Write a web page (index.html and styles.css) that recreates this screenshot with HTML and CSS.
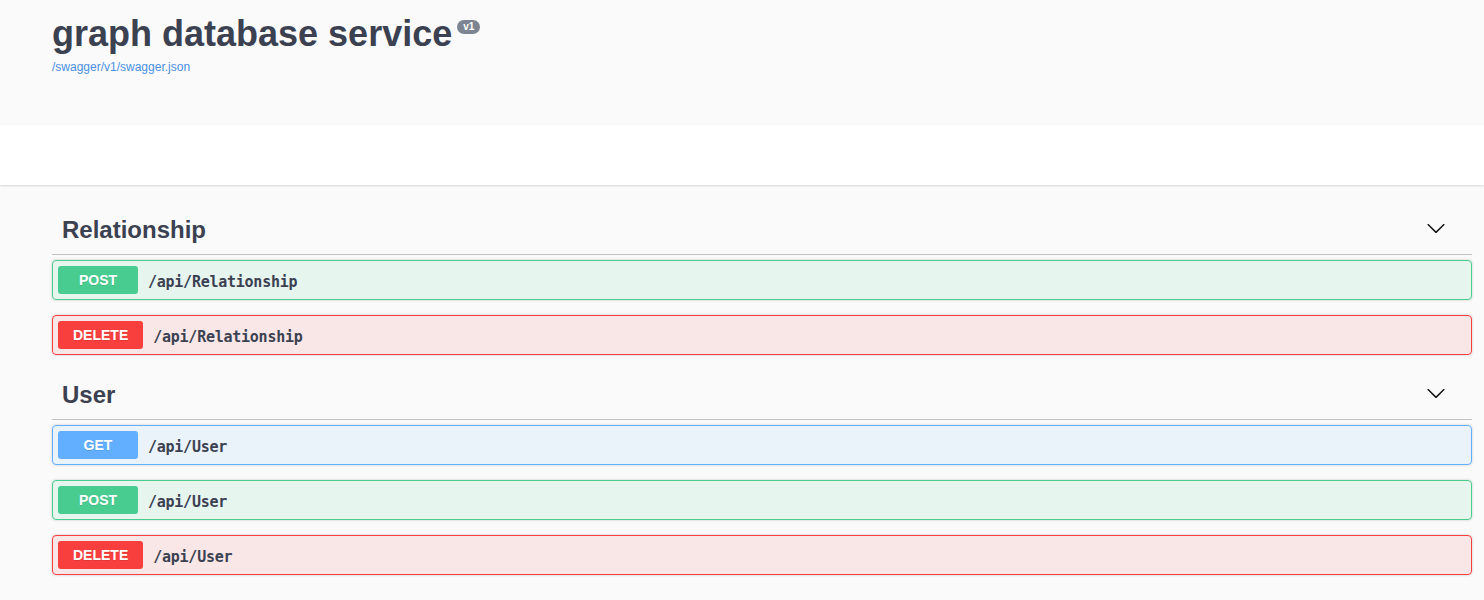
FILE: index.html
```html
<!DOCTYPE html>
<html lang="en">
<head>
<meta charset="utf-8">
<title>graph database service</title>
<link rel="stylesheet" href="styles.css">
</head>
<body>
<div class="info">
  <h2 class="title">graph database service<small class="version">v1</small></h2>
  <a class="link" href="#">/swagger/v1/swagger.json</a>
</div>
<div class="scheme-container"></div>
<div class="wrapper">
  <section class="tag-section">
    <h3 class="tag">
      <span class="tag-name">Relationship</span>
      <button class="expand" aria-label="expand">
        <svg width="20" height="20" viewBox="0 0 20 20"><path d="M17.418 6.109c.272-.268.709-.268.979 0s.271.701 0 .969l-7.908 7.83c-.27.268-.707.268-.979 0l-7.908-7.830c-.27-.268-.27-.701 0-.969.271-.268.709-.268.979 0L10 13.25l7.418-7.141z"/></svg>
      </button>
    </h3>
    <div class="opblock post"><span class="method">POST</span><span class="path">/api/Relationship</span></div>
    <div class="opblock delete"><span class="method">DELETE</span><span class="path">/api/Relationship</span></div>
  </section>
  <section class="tag-section">
    <h3 class="tag">
      <span class="tag-name">User</span>
      <button class="expand" aria-label="expand">
        <svg width="20" height="20" viewBox="0 0 20 20"><path d="M17.418 6.109c.272-.268.709-.268.979 0s.271.701 0 .969l-7.908 7.83c-.27.268-.707.268-.979 0l-7.908-7.830c-.27-.268-.27-.701 0-.969.271-.268.709-.268.979 0L10 13.25l7.418-7.141z"/></svg>
      </button>
    </h3>
    <div class="opblock get"><span class="method">GET</span><span class="path">/api/User</span></div>
    <div class="opblock post"><span class="method">POST</span><span class="path">/api/User</span></div>
    <div class="opblock delete"><span class="method">DELETE</span><span class="path">/api/User</span></div>
  </section>
</div>
</body>
</html>
```
FILE: styles.css
```css
html, body {
  margin: 0;
  padding: 0;
}
body {
  background: #fafafa;
  font-family: "Liberation Sans", Arial, sans-serif;
  color: #3b4151;
  overflow: hidden;
}
.info {
  padding: 13px 12px 51px 52px;
}
.title {
  margin: 0;
  font-size: 36px;
  line-height: 41px;
  font-weight: 700;
  color: #3b4151;
}
.version {
  display: inline-block;
  vertical-align: top;
  margin: 7px 0 0 5px;
  padding: 2px 6px;
  font-size: 10px;
  line-height: 10px;
  font-weight: 700;
  color: #fff;
  background: #7d8492;
  border-radius: 57px;
}
.link {
  display: block;
  margin-top: 6px;
  font-size: 12px;
  line-height: 14px;
  color: #4990e2;
  text-decoration: none;
}
.scheme-container {
  height: 60px;
  background: #fff;
  box-shadow: 0 1px 2px 0 rgba(0, 0, 0, 0.15);
  margin-bottom: 20px;
}
.wrapper {
  padding: 0 12px 0 52px;
}
.tag {
  display: flex;
  align-items: center;
  margin: 0 0 5px;
  padding: 10px 20px 10px 10px;
  border-bottom: 1px solid rgba(59, 65, 81, 0.3);
  font-size: 24px;
  line-height: 29px;
  font-weight: 700;
  color: #3b4151;
}
.tag-name {
  flex: 1;
}
.expand {
  border: none;
  background: none;
  padding: 0;
  margin: -4px 6px 0 0;
  width: 20px;
  height: 20px;
  display: flex;
}
.expand svg {
  fill: #111;
}
.opblock {
  display: flex;
  align-items: center;
  padding: 5px;
  margin: 0 0 15px;
  border: 1px solid;
  border-radius: 4px;
  box-shadow: 0 0 3px rgba(0, 0, 0, 0.19);
}
.method {
  min-width: 80px;
  box-sizing: border-box;
  padding: 6px 15px;
  font-size: 14px;
  line-height: 16px;
  font-weight: 700;
  text-align: center;
  color: #fff;
  border-radius: 3px;
  text-shadow: 0 1px 0 rgba(0, 0, 0, 0.1);
}
.path {
  padding: 3px 10px 0;
  font-family: "DejaVu Sans Mono", monospace;
  font-size: 15px;
  letter-spacing: -0.25px;
  font-weight: 700;
  color: #3b4151;
}
.post {
  border-color: #49cc90;
  background: rgba(73, 204, 144, 0.1);
}
.post .method { background: #49cc90; }
.delete {
  border-color: #f93e3e;
  background: rgba(249, 62, 62, 0.1);
}
.delete .method { background: #f93e3e; }
.get {
  border-color: #61affe;
  background: rgba(97, 175, 254, 0.1);
}
.get .method { background: #61affe; }
```
